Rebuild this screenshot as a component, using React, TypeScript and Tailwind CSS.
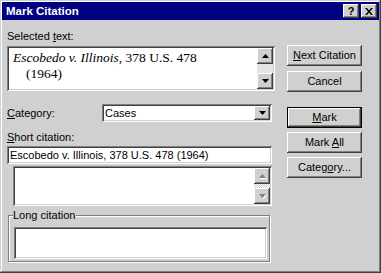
import React from 'react';

const raised =
  'bg-[#d0d0d0] shadow-[inset_-1px_-1px_#404040,inset_1px_1px_#ffffff,inset_-2px_-2px_#808080,inset_2px_2px_#d0d0d0]';
const sunken =
  'bg-white shadow-[inset_1px_1px_#808080,inset_-1px_-1px_#ffffff,inset_2px_2px_#404040,inset_-2px_-2px_#d0d0d0]';

const Arrow = ({ dir, disabled }: { dir: 'up' | 'down'; disabled?: boolean }) => (
  <div className={`w-[16px] h-[16px] flex items-center justify-center ${raised}`}>
    <svg width="7" height="4" viewBox="0 0 7 4" className="overflow-visible">
      {disabled && (
        <polygon
          points={dir === 'up' ? '4.5,1 8,5 1,5' : '1,1 8,1 4.5,5'}
          fill="#ffffff"
        />
      )}
      <polygon
        points={dir === 'up' ? '3.5,0 7,4 0,4' : '0,0 7,0 3.5,4'}
        fill={disabled ? '#808080' : '#000000'}
      />
    </svg>
  </div>
);

const Button = ({ children, def }: { children: React.ReactNode; def?: boolean }) => (
  <div
    className={
      def
        ? 'h-[21px] w-[75px] border border-black flex'
        : 'h-[21px] w-[75px] flex'
    }
  >
    <div className={`flex-1 flex items-center justify-center text-[11px] leading-[13px] text-black ${raised}`}>
      <span>{children}</span>
    </div>
  </div>
);

export default function App() {
  return (
    <div className="w-[381px] h-[273px] bg-[#d0d0d0] p-[2px] flex flex-col font-['Liberation_Sans',Arial,sans-serif] shadow-[inset_-1px_-1px_#404040,inset_1px_1px_#d0d0d0,inset_-2px_-2px_#808080,inset_2px_2px_#ffffff] select-none">
      {/* title bar */}
      <div className="h-[18px] bg-[#000080] flex items-center justify-between pl-[4px] pr-[2px]">
        <span className="text-white font-bold text-[11.5px] leading-[13px]">Mark Citation</span>
        <div className="flex gap-[2px]">
          <div className={`w-[16px] h-[14px] flex items-center justify-center text-[11px] font-bold leading-none text-black ${raised}`}>?</div>
          <div className={`w-[16px] h-[14px] flex items-center justify-center ${raised}`}>
            <svg width="8" height="7" viewBox="0 0 8 7">
              <path d="M0 0h2l2 2.5L6 0h2L5 3.5 8 7H6L4 4.5 2 7H0l3-3.5z" fill="#000" />
            </svg>
          </div>
        </div>
      </div>

      <div className="flex pl-[5px]">
        {/* left column */}
        <div className="w-[268px] flex flex-col">
          <div className="mt-[10px] h-[13px] text-[11px] leading-[13px] text-black">
            Selected <u>t</u>ext:
          </div>
          <div className={`mt-[3px] h-[45px] p-[2px] flex ${sunken}`}>
            <div className="flex-1 pl-[4px] pt-[2px] font-['Liberation_Serif','Times_New_Roman',serif] text-[13.5px] leading-[16px] text-black">
              <div>
                <i>Escobedo v. Illinois,</i> 378 U.S. 478
              </div>
              <div className="pl-[13px]">(1964)</div>
            </div>
            <div className="w-[16px] flex flex-col">
              <Arrow dir="up" />
              <div className="flex-1 bg-[#e4e4e4]" />
              <Arrow dir="down" />
            </div>
          </div>

          <div className="mt-[13px] h-[18px] flex items-center">
            <span className="w-[95px] text-[11px] leading-[13px] text-black">
              <u>C</u>ategory:
            </span>
            <div className={`w-[170px] h-[18px] p-[2px] flex ${sunken}`}>
              <span className="flex-1 pl-[1px] text-[11px] leading-[14px] text-black">Cases</span>
              <div className={`w-[16px] h-[14px] flex items-center justify-center ${raised}`}>
                <svg width="7" height="4" viewBox="0 0 7 4">
                  <polygon points="0,0 7,0 3.5,4" fill="#000" />
                </svg>
              </div>
            </div>
          </div>

          <div className="mt-[9px] h-[13px] text-[11px] leading-[13px] text-black">
            <u>S</u>hort citation:
          </div>
          <div className={`mt-[2px] w-[265px] h-[18px] p-[2px] pl-[3px] text-[11px] leading-[14px] text-black ${sunken}`}>
            Escobedo v. Illinois, 378 U.S. 478 (1964)
          </div>
          <div className={`mt-[2px] ml-[6px] w-[259px] h-[40px] p-[2px] flex ${sunken}`}>
            <div className="flex-1" />
            <div className="w-[16px] flex flex-col">
              <Arrow dir="up" disabled />
              <div className="flex-1 bg-[repeating-conic-gradient(#ffffff_0_25%,#d0d0d0_0_50%)] bg-[length:2px_2px]" />
              <Arrow dir="down" disabled />
            </div>
          </div>

          <div className="relative mt-[9px] ml-[1px] w-[262px] h-[47px] border border-[#808080] shadow-[1px_1px_#ffffff,inset_1px_1px_#ffffff] pl-[5px] pt-[11px]">
            <span className="absolute left-[4px] top-[-7px] bg-[#d0d0d0] pr-[1px] text-[11px] leading-[13px] text-black">
              Long citation
            </span>
            <div className={`w-[253px] h-[32px] ${sunken}`} />
          </div>
        </div>

        {/* right column */}
        <div className="ml-[12px] w-[75px] flex flex-col">
          <div className="mt-[25px]">
            <Button>
              <u>N</u>ext Citation
            </Button>
          </div>
          <div className="mt-[5px]">
            <Button>Cancel</Button>
          </div>
          <div className="mt-[15px]">
            <Button def>
              <u>M</u>ark
            </Button>
          </div>
          <div className="mt-[4px]">
            <Button>
              Mark <u>A</u>ll
            </Button>
          </div>
          <div className="mt-[4px]">
            <Button>
              Categ<u>o</u>ry...
            </Button>
          </div>
        </div>
      </div>
    </div>
  );
}
